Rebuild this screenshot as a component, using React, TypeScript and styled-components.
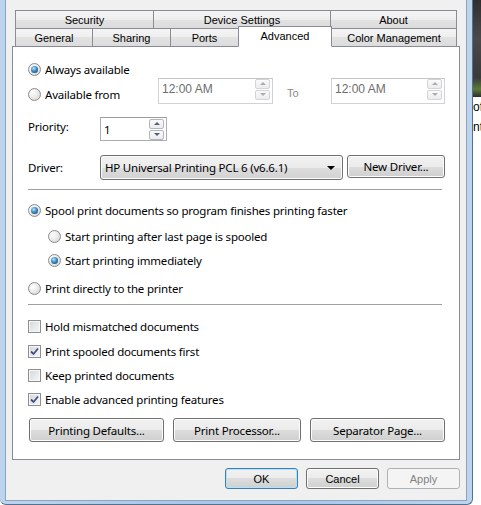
import React from "react";
import styled, { createGlobalStyle, css } from "styled-components";

const UI = `"Noto Sans", "Open Sans", sans-serif`;
const CLASSIC = `"Liberation Sans", Arial, sans-serif`;

const uiFont = css`
  font-family: ${UI};
  font-size: 11.5px;
  letter-spacing: -0.2px;
`;

const GlobalStyle = createGlobalStyle`
  html, body {
    margin: 0;
    padding: 0;
    background: #fff;
  }
  body {
    overflow: hidden;
  }
  * {
    box-sizing: border-box;
  }
`;

const Screen = styled.div`
  display: flex;
  width: 481px;
  height: 505px;
`;

const Frame = styled.div`
  width: 473px;
  height: 505px;
  display: flex;
  flex-direction: column;
  padding: 0 5px 3px 5px;
  background: linear-gradient(90deg, #bcd4ee, #a8c6e8 40%, #a8c6e8 60%, #bcd4ee);
  border-right: 1px solid #56718f;
  border-bottom: 1px solid #56718f;
  border-bottom-left-radius: 6px;
  border-bottom-right-radius: 6px;
`;

const Dialog = styled.div`
  flex: 1;
  display: flex;
  flex-direction: column;
  background: #f0f0f0;
  border: 1px solid #8ea4be;
  border-top: none;
  padding: 10px 6px 0 6px;
`;

const TabStrip = styled.div`
  display: flex;
  flex-direction: column;
  padding-left: 3px;
`;

const TabRow = styled.div<{ $front?: boolean }>`
  display: flex;
  margin-top: ${(p) => (p.$front ? -1 : 0)}px;
`;

const Tab = styled.div<{ $w: number; $active?: boolean }>`
  width: ${(p) => p.$w}px;
  height: 19px;
  margin-left: -1px;
  border: 1px solid #898c95;
  background: linear-gradient(#f4f4f4, #eeeeee 50%, #e2e2e2 50%, #dcdcdc);
  font: 11px ${CLASSIC};
  color: #000;
  display: flex;
  align-items: center;
  justify-content: center;
  padding-top: 1px;

  &:first-child {
    margin-left: 0;
  }

  ${(p) =>
    p.$active &&
    css`
      height: 21px;
      margin-top: -2px;
      background: #fff;
      border-bottom-color: #fff;
      position: relative;
      z-index: 2;
      padding-top: 0;
      padding-bottom: 2px;
    `}
`;

const Panel = styled.div`
  width: 448px;
  height: 414px;
  margin-top: -1px;
  border: 1px solid #898c95;
  background: #fff;
  padding: 0 14px 0 15px;
  display: flex;
  flex-direction: column;
`;

const Line = styled.div<{ $top: number; $indent?: number }>`
  display: flex;
  align-items: center;
  margin-top: ${(p) => p.$top}px;
  margin-left: ${(p) => p.$indent ?? 0}px;
`;

const TopLine = styled(Line)`
  align-items: flex-start;
`;

const Option = styled.label<{ $w?: number; $offset?: number }>`
  display: flex;
  align-items: center;
  gap: 4px;
  height: 16px;
  width: ${(p) => (p.$w ? `${p.$w}px` : "auto")};
  margin-top: ${(p) => p.$offset ?? 0}px;
  ${uiFont};
  color: #000;
  white-space: nowrap;
`;

const Radio = styled.span<{ $on?: boolean }>`
  flex: none;
  width: 13px;
  height: 13px;
  border-radius: 50%;
  border: 1px solid #8b8c8d;
  background: radial-gradient(circle at 35% 35%, #ffffff 0%, #ececec 45%, #cdcdcd 100%);
  display: flex;
  align-items: center;
  justify-content: center;

  &::after {
    content: "";
    display: ${(p) => (p.$on ? "block" : "none")};
    width: 7px;
    height: 7px;
    border-radius: 50%;
    background: radial-gradient(circle at 40% 35%, #bfe6fb 0%, #4596cb 40%, #123f66 90%);
  }
`;

const Check = styled.span`
  flex: none;
  width: 13px;
  height: 13px;
  border: 1px solid #8e8f8f;
  background: linear-gradient(135deg, #d3d6da, #f8f8f8);
  box-shadow: inset 0 0 0 1px #f6f6f6;
  display: flex;
  align-items: center;
  justify-content: center;
`;

const Label = styled.span<{ $w: number; $offset?: number }>`
  width: ${(p) => p.$w}px;
  margin-top: ${(p) => p.$offset ?? 0}px;
  ${uiFont};
  color: #000;
  line-height: 16px;
`;

const DimLabel = styled.span<{ $w: number }>`
  width: ${(p) => p.$w}px;
  margin-top: 7px;
  padding-left: 14px;
  font: 11px ${CLASSIC};
  color: #8a8a8a;
  line-height: 16px;
`;

const Field = styled.div<{ $w: number; $h: number; $disabled?: boolean }>`
  width: ${(p) => p.$w}px;
  height: ${(p) => p.$h}px;
  display: flex;
  align-items: center;
  padding: 0 2px 0 3px;
  background: #fff;
  border: 1px solid ${(p) => (p.$disabled ? "#cfd3d8" : "#abadb3")};
  border-top-color: ${(p) => (p.$disabled ? "#c2c4c8" : "#9a9ca2")};
  ${(p) =>
    p.$disabled
      ? css`
          font: 12px ${CLASSIC};
          color: #6d6d6d;
          padding-bottom: 4px;
        `
      : css`
          ${uiFont};
          color: #000;
        `}
`;

const FieldText = styled.span`
  flex: 1;
`;

const Spin = styled.div`
  display: flex;
  flex-direction: column;
  gap: 1px;
  align-self: center;
`;

const SpinButton = styled.div<{ $disabled?: boolean }>`
  width: 15px;
  height: 10px;
  border: 1px solid ${(p) => (p.$disabled ? "#d3d5d8" : "#b3b6bb")};
  border-radius: 2px;
  background: linear-gradient(#fafafa, #ececec);
  display: flex;
  align-items: center;
  justify-content: center;
`;

const Arrow = styled.span<{ $down?: boolean; $disabled?: boolean }>`
  width: 0;
  height: 0;
  border-left: 3px solid transparent;
  border-right: 3px solid transparent;
  ${(p) =>
    p.$down
      ? css`
          border-top: 3px solid ${p.$disabled ? "#a9acb0" : "#4c607f"};
        `
      : css`
          border-bottom: 3px solid ${p.$disabled ? "#a9acb0" : "#4c607f"};
        `}
`;

const Combo = styled.div`
  width: 243px;
  height: 25px;
  display: flex;
  align-items: center;
  justify-content: space-between;
  padding: 0 7px 0 4px;
  border: 1px solid #707070;
  border-radius: 3px;
  background: linear-gradient(#f2f2f2, #ebebeb 50%, #dddddd 50%, #d2d2d2);
  box-shadow: inset 0 0 0 1px #fbfbfb;
  ${uiFont};
  color: #000;
`;

const ComboArrow = styled.span`
  width: 0;
  height: 0;
  border-left: 4px solid transparent;
  border-right: 4px solid transparent;
  border-top: 4px solid #000;
  margin-top: 1px;
`;

const Button = styled.button<{
  $w: number;
  $h: number;
  $classic?: boolean;
  $primary?: boolean;
  $disabled?: boolean;
  $gap?: number;
}>`
  width: ${(p) => p.$w}px;
  height: ${(p) => p.$h}px;
  padding: 0;
  margin: 0 0 0 ${(p) => p.$gap ?? 0}px;
  border: 1px solid #707070;
  border-radius: 3px;
  background: linear-gradient(#f2f2f2, #ebebeb 50%, #dddddd 50%, #cfcfcf);
  box-shadow: inset 0 0 0 1px #fcfcfc;
  color: #000;
  display: flex;
  align-items: center;
  justify-content: center;
  ${(p) =>
    p.$classic
      ? css`
          font: 11px ${CLASSIC};
        `
      : uiFont};

  ${(p) =>
    p.$primary &&
    css`
      border-color: #3c7fb1;
      box-shadow: inset 0 0 0 1px #aee3fa;
    `}

  ${(p) =>
    p.$disabled &&
    css`
      border-color: #adb2b5;
      background: #f4f4f4;
      box-shadow: none;
      color: #838383;
    `}
`;

const Separator = styled.div<{ $top: number }>`
  margin-top: ${(p) => p.$top}px;
  width: 414px;
  height: 1px;
  background: #a0a0a0;
`;

const ButtonRow = styled.div`
  display: flex;
  gap: 9px;
  margin-top: 11px;
  padding-left: 1px;
`;

const Footer = styled.div`
  display: flex;
  justify-content: flex-end;
  gap: 8px;
  margin-top: 8px;
  padding-right: 0;
`;

const Desktop = styled.div`
  width: 8px;
  height: 505px;
  display: flex;
  flex-direction: column;
  background: #fff;
  overflow: hidden;
`;

const DesktopImage = styled.div`
  flex: none;
  height: 97px;
  background: linear-gradient(#2e2e2e, #4a4a4a 40%, #3a3a3a 80%, #5b7a3a 92%, #2b2b2b);
`;

const DesktopText = styled.div`
  font: 12px ${CLASSIC};
  line-height: 20px;
  color: #000;
  white-space: nowrap;
`;

const CheckMark = () => (
  <svg width="9" height="9" viewBox="0 0 9 9">
    <path d="M1 4.5 L3.5 7 L8 1.5" fill="none" stroke="#3f5189" strokeWidth="1.8" />
  </svg>
);

const SpinBox = ({ disabled }: { disabled?: boolean }) => (
  <Spin>
    <SpinButton $disabled={disabled}>
      <Arrow $disabled={disabled} />
    </SpinButton>
    <SpinButton $disabled={disabled}>
      <Arrow $down $disabled={disabled} />
    </SpinButton>
  </Spin>
);

const RadioOption = ({
  on,
  children,
  w,
  offset,
}: {
  on?: boolean;
  children: React.ReactNode;
  w?: number;
  offset?: number;
}) => (
  <Option $w={w} $offset={offset}>
    <Radio $on={on} />
    {children}
  </Option>
);

const CheckOption = ({ on, children }: { on?: boolean; children: React.ReactNode }) => (
  <Option>
    <Check>{on && <CheckMark />}</Check>
    {children}
  </Option>
);

export default function App() {
  return (
    <>
      <GlobalStyle />
      <Screen>
        <Frame>
          <Dialog>
            <TabStrip>
              <TabRow>
                <Tab $w={139}>Security</Tab>
                <Tab $w={178}>Device Settings</Tab>
                <Tab $w={127}>About</Tab>
              </TabRow>
              <TabRow $front>
                <Tab $w={78}>General</Tab>
                <Tab $w={79}>Sharing</Tab>
                <Tab $w={69}>Ports</Tab>
                <Tab $w={94} $active>
                  Advanced
                </Tab>
                <Tab $w={126}>Color Management</Tab>
              </TabRow>
            </TabStrip>

            <Panel>
              <Line $top={14}>
                <RadioOption on>Always available</RadioOption>
              </Line>

              <TopLine $top={1}>
                <RadioOption w={130} offset={8}>
                  Available from
                </RadioOption>
                <Field $w={115} $h={26} $disabled>
                  <FieldText>12:00 AM</FieldText>
                  <SpinBox disabled />
                </Field>
                <DimLabel $w={58}>To</DimLabel>
                <Field $w={114} $h={26} $disabled>
                  <FieldText>12:00 AM</FieldText>
                  <SpinBox disabled />
                </Field>
              </TopLine>

              <TopLine $top={13}>
                <Label $w={72} $offset={2}>
                  Priority:
                </Label>
                <Field $w={67} $h={24}>
                  <FieldText>1</FieldText>
                  <SpinBox />
                </Field>
              </TopLine>

              <TopLine $top={14}>
                <Label $w={72} $offset={5}>
                  Driver:
                </Label>
                <Combo>
                  <span>HP Universal Printing PCL 6 (v6.6.1)</span>
                  <ComboArrow />
                </Combo>
                <Button $w={98} $h={23} $gap={4}>
                  New Driver...
                </Button>
              </TopLine>

              <Separator $top={9} />

              <Line $top={12}>
                <RadioOption on>Spool print documents so program finishes printing faster</RadioOption>
              </Line>
              <Line $top={10} $indent={20}>
                <RadioOption>Start printing after last page is spooled</RadioOption>
              </Line>
              <Line $top={8} $indent={20}>
                <RadioOption on>Start printing immediately</RadioOption>
              </Line>
              <Line $top={12}>
                <RadioOption>Print directly to the printer</RadioOption>
              </Line>

              <Separator $top={8} />

              <Line $top={13}>
                <CheckOption>Hold mismatched documents</CheckOption>
              </Line>
              <Line $top={9}>
                <CheckOption on>Print spooled documents first</CheckOption>
              </Line>
              <Line $top={8}>
                <CheckOption>Keep printed documents</CheckOption>
              </Line>
              <Line $top={8}>
                <CheckOption on>Enable advanced printing features</CheckOption>
              </Line>

              <ButtonRow>
                <Button $w={135} $h={24}>
                  Printing Defaults...
                </Button>
                <Button $w={128} $h={24}>
                  Print Processor...
                </Button>
                <Button $w={135} $h={24}>
                  Separator Page...
                </Button>
              </ButtonRow>
            </Panel>

            <Footer>
              <Button $w={73} $h={21} $classic $primary>
                OK
              </Button>
              <Button $w={73} $h={21} $classic>
                Cancel
              </Button>
              <Button $w={73} $h={21} $classic $disabled>
                Apply
              </Button>
            </Footer>
          </Dialog>
        </Frame>

        <Desktop>
          <DesktopImage />
          <DesktopText>
            of
            <br />
            nt
          </DesktopText>
        </Desktop>
      </Screen>
    </>
  );
}
